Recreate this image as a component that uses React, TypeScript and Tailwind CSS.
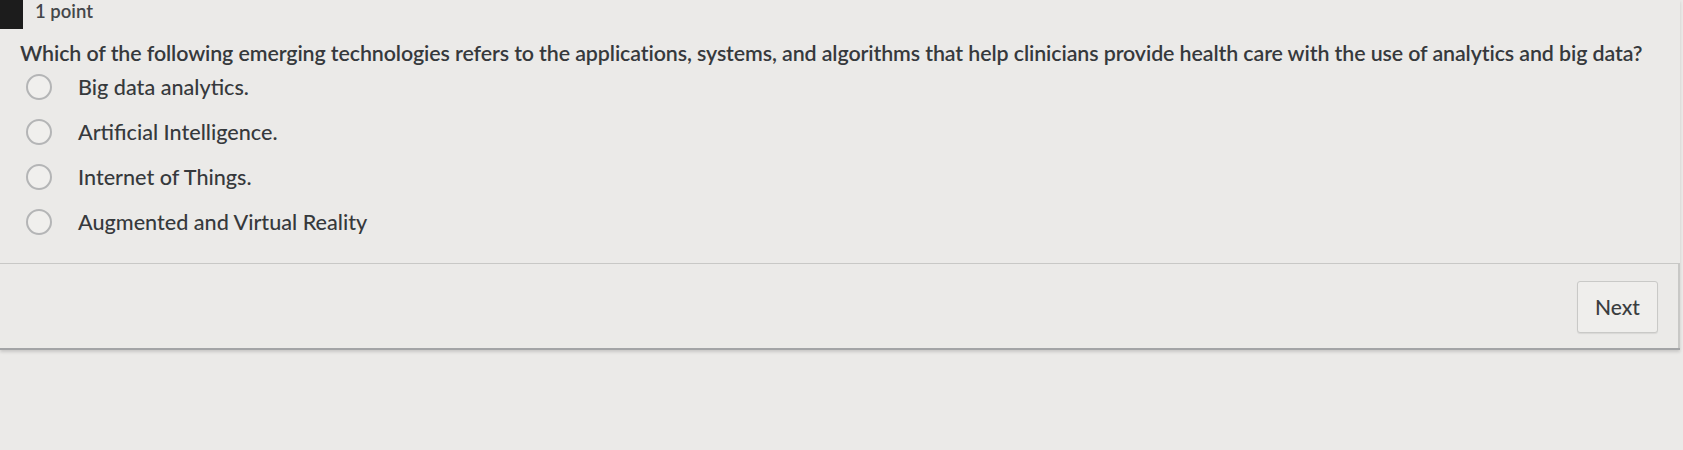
const options = [
  'Big data analytics.',
  'Artificial Intelligence.',
  'Internet of Things.',
  'Augmented and Virtual Reality',
];

const App = () => (
  <div
    className="h-[450px] w-[1683px] overflow-hidden bg-[#ebeae8] text-[#3a3d40]"
    style={{ fontFamily: 'Lato, "Open Sans", sans-serif' }}
  >
    <div className="flex h-[350px] w-[1680px] flex-col border-b-2 border-[#a3a4a6] shadow-[0_2px_3px_rgba(0,0,0,0.15)]">
      <div className="flex h-[30px] items-start">
        <div className="h-[29px] w-[23px] bg-[#1c1c1c]" />
        <span className="ml-[12px] mt-[1px] text-[18.5px] font-semibold leading-[20px] text-[#44474a]">1 point</span>
      </div>
      <p className="ml-[20px] mt-[11px] whitespace-nowrap text-[21.4px] font-semibold leading-[24px] tracking-[-0.1px] text-[#36393c]">
        Which of the following emerging technologies refers to the applications, systems, and algorithms that help
        clinicians provide health care with the use of analytics and big data?
      </p>
      <div className="ml-[26px] mt-[9px] flex flex-col gap-[19px]">
        {options.map((label) => (
          <div key={label} className="flex items-center">
            <span className="h-[26px] w-[26px] rounded-full border-[2px] border-[#b4b5b6] bg-[#f0efed]" />
            <span className="ml-[26px] text-[21.6px] font-medium leading-[26px] text-[#36393c]">{label}</span>
          </div>
        ))}
      </div>
      <div className="mt-[28px] flex flex-1 items-start justify-end border-r-2 border-t border-[#c8c8c6] pr-[20px]">
        <button className="mt-[17px] h-[52px] w-[81px] rounded-[3px] border border-[#c9c9c7] bg-[#efeeec] text-[21px] font-medium text-[#3a3d40] shadow-[0_1px_1px_rgba(0,0,0,0.08)]">
          Next
        </button>
      </div>
    </div>
  </div>
);

export default App;
